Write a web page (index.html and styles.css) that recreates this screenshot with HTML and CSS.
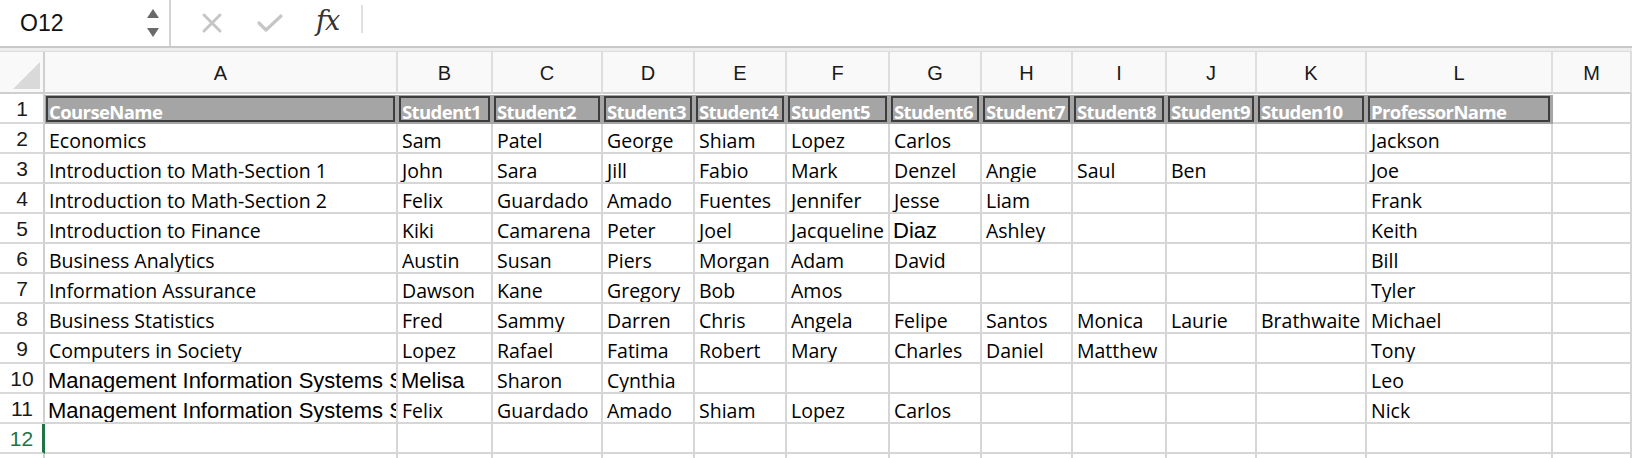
FILE: index.html
```html
<!DOCTYPE html>
<html>
<head>
<meta charset="utf-8">
<link rel="stylesheet" href="styles.css">
</head>
<body>
<div class="toolbar">
  <div class="namebox">
    <span class="cellref">O12</span>
    <span class="spin">
      <svg width="14" height="30" viewBox="0 0 14 30"><path d="M7 1 L13 10 L1 10 Z" fill="#6a6a6a"/><path d="M1 20 L13 20 L7 29 Z" fill="#6a6a6a"/></svg>
    </span>
  </div>
  <div class="fbtns">
    <svg class="ico" width="22" height="22" viewBox="0 0 22 22"><path d="M3 3 L19 19 M19 3 L3 19" stroke="#c6c6c6" stroke-width="3" stroke-linecap="round"/></svg>
    <svg class="ico" width="28" height="22" viewBox="0 0 28 22"><path d="M3 11 L10 18 L25 4" stroke="#c6c6c6" stroke-width="3.2" fill="none" stroke-linecap="round" stroke-linejoin="round"/></svg>
    <span class="fx">fx</span>
    <span class="fsep"></span>
  </div>
  <div class="formula"></div>
</div>
<div class="band"></div>
<div class="sheet">
  <div class="corner"><svg width="30" height="30" viewBox="0 0 30 30"><path d="M29 2 L29 29 L2 29 Z" fill="#d9d9d9"/></svg></div>
  <div class="ch">A</div><div class="ch">B</div><div class="ch">C</div><div class="ch">D</div><div class="ch">E</div><div class="ch">F</div><div class="ch">G</div><div class="ch">H</div><div class="ch">I</div><div class="ch">J</div><div class="ch">K</div><div class="ch">L</div><div class="ch">M</div>

  <div class="rh">1</div>
  <div class="c hd">CourseName</div><div class="c hd">Student1</div><div class="c hd">Student2</div><div class="c hd">Student3</div><div class="c hd">Student4</div><div class="c hd">Student5</div><div class="c hd">Student6</div><div class="c hd">Student7</div><div class="c hd">Student8</div><div class="c hd">Student9</div><div class="c hd">Studen10</div><div class="c hd">ProfessorName</div><div class="c"></div>

  <div class="rh">2</div>
  <div class="c">Economics</div><div class="c">Sam</div><div class="c">Patel</div><div class="c">George</div><div class="c">Shiam</div><div class="c">Lopez</div><div class="c">Carlos</div><div class="c"></div><div class="c"></div><div class="c"></div><div class="c"></div><div class="c">Jackson</div><div class="c"></div>

  <div class="rh">3</div>
  <div class="c">Introduction to Math-Section 1</div><div class="c">John</div><div class="c">Sara</div><div class="c">Jill</div><div class="c">Fabio</div><div class="c">Mark</div><div class="c">Denzel</div><div class="c">Angie</div><div class="c">Saul</div><div class="c">Ben</div><div class="c"></div><div class="c">Joe</div><div class="c"></div>

  <div class="rh">4</div>
  <div class="c">Introduction to Math-Section 2</div><div class="c">Felix</div><div class="c">Guardado</div><div class="c">Amado</div><div class="c">Fuentes</div><div class="c">Jennifer</div><div class="c">Jesse</div><div class="c">Liam</div><div class="c"></div><div class="c"></div><div class="c"></div><div class="c">Frank</div><div class="c"></div>

  <div class="rh">5</div>
  <div class="c">Introduction to Finance</div><div class="c">Kiki</div><div class="c">Camarena</div><div class="c">Peter</div><div class="c">Joel</div><div class="c">Jacqueline</div><div class="c ar">Diaz</div><div class="c">Ashley</div><div class="c"></div><div class="c"></div><div class="c"></div><div class="c">Keith</div><div class="c"></div>

  <div class="rh">6</div>
  <div class="c">Business Analytics</div><div class="c">Austin</div><div class="c">Susan</div><div class="c">Piers</div><div class="c">Morgan</div><div class="c">Adam</div><div class="c">David</div><div class="c"></div><div class="c"></div><div class="c"></div><div class="c"></div><div class="c">Bill</div><div class="c"></div>

  <div class="rh">7</div>
  <div class="c">Information Assurance</div><div class="c">Dawson</div><div class="c">Kane</div><div class="c">Gregory</div><div class="c">Bob</div><div class="c">Amos</div><div class="c"></div><div class="c"></div><div class="c"></div><div class="c"></div><div class="c"></div><div class="c">Tyler</div><div class="c"></div>

  <div class="rh">8</div>
  <div class="c">Business Statistics</div><div class="c">Fred</div><div class="c">Sammy</div><div class="c">Darren</div><div class="c">Chris</div><div class="c">Angela</div><div class="c">Felipe</div><div class="c">Santos</div><div class="c">Monica</div><div class="c">Laurie</div><div class="c">Brathwaite</div><div class="c">Michael</div><div class="c"></div>

  <div class="rh">9</div>
  <div class="c">Computers in Society</div><div class="c">Lopez</div><div class="c">Rafael</div><div class="c">Fatima</div><div class="c">Robert</div><div class="c">Mary</div><div class="c">Charles</div><div class="c">Daniel</div><div class="c">Matthew</div><div class="c"></div><div class="c"></div><div class="c">Tony</div><div class="c"></div>

  <div class="rh">10</div>
  <div class="c ar">Management Information Systems S</div><div class="c ar">Melisa</div><div class="c">Sharon</div><div class="c">Cynthia</div><div class="c"></div><div class="c"></div><div class="c"></div><div class="c"></div><div class="c"></div><div class="c"></div><div class="c"></div><div class="c">Leo</div><div class="c"></div>

  <div class="rh">11</div>
  <div class="c ar">Management Information Systems S</div><div class="c">Felix</div><div class="c">Guardado</div><div class="c">Amado</div><div class="c">Shiam</div><div class="c">Lopez</div><div class="c">Carlos</div><div class="c"></div><div class="c"></div><div class="c"></div><div class="c"></div><div class="c">Nick</div><div class="c"></div>

  <div class="rh sel">12</div>
  <div class="c"></div><div class="c"></div><div class="c"></div><div class="c"></div><div class="c"></div><div class="c"></div><div class="c"></div><div class="c"></div><div class="c"></div><div class="c"></div><div class="c"></div><div class="c"></div><div class="c"></div>

  <div class="rh"></div>
  <div class="c"></div><div class="c"></div><div class="c"></div><div class="c"></div><div class="c"></div><div class="c"></div><div class="c"></div><div class="c"></div><div class="c"></div><div class="c"></div><div class="c"></div><div class="c"></div><div class="c"></div>
</div>
</body>
</html>
```

FILE: styles.css
```css
* { box-sizing: border-box; }
html, body { margin: 0; padding: 0; background: #ffffff; overflow: hidden; }
body { width: 1632px; height: 458px; font-family: "Liberation Sans", Arial, sans-serif; }

.toolbar {
  height: 48px;
  display: flex;
  background: #ffffff;
  border-bottom: 2px solid #c9c9c9;
}
.namebox {
  width: 171px;
  display: flex;
  align-items: center;
  border-right: 2px solid #d3d3d3;
  padding-left: 20px;
}
.cellref {
  font-size: 23px;
  color: #111;
  width: 126px;
}
.spin { display: flex; align-items: center; }
.fbtns {
  display: flex;
  align-items: center;
  padding-left: 30px;
}
.fbtns .ico { margin-right: 33px; }
.fbtns .ico + .ico { margin-right: 32px; }
.fx {
  font-family: "DejaVu Serif", "Liberation Serif", serif;
  font-style: italic;
  font-size: 27px;
  color: #333;
  letter-spacing: -1px;
  margin-top: -5px;
}
.fsep {
  width: 2px;
  height: 28px;
  background: #e0e0e0;
  margin-left: 22px;
  margin-top: -8px;
}
.formula { flex: 1; }

.band {
  height: 4px;
  background: #ededed;
  border-bottom: 1px solid #dcdcdc;
}

.sheet {
  display: grid;
  grid-template-columns: 45px 353px 95px 110px 92px 92px 103px 92px 91px 94px 90px 110px 186px 79px;
  grid-template-rows: 42px repeat(12, 30px) 10px;
}
.corner {
  background: #f9f9f9;
  border-right: 2px solid #cfcfcf;
  border-bottom: 2px solid #cfcfcf;
  display: flex;
  align-items: flex-end;
  justify-content: flex-end;
  padding: 0 2px 2px 0;
  overflow: hidden;
}
.ch {
  background: #f9f9f9;
  border-right: 2px solid #dedede;
  border-bottom: 2px solid #cfcfcf;
  display: flex;
  align-items: center;
  justify-content: center;
  font-size: 20px;
  color: #1a1a1a;
  padding-top: 2px;
}
.rh {
  background: #ffffff;
  border-right: 2px solid #cfcfcf;
  border-bottom: 2px solid #d9d9d9;
  display: flex;
  align-items: center;
  justify-content: center;
  font-size: 21px;
  color: #1a1a1a;
  padding: 2px 0 0 1px;
}
.rh.sel {
  color: #217346;
  border-right: 3px solid #217346;
}
.c {
  border-right: 2px solid #d6d6d6;
  border-bottom: 2px solid #d6d6d6;
  font-family: "Open Sans", "Lato", sans-serif;
  font-size: 19.5px;
  letter-spacing: 0;
  color: #000;
  white-space: nowrap;
  overflow: hidden;
  padding: 5px 0 0 4px;
  display: flex;
  align-items: center;
}
.c.ar {
  font-family: "Liberation Sans", Arial, sans-serif;
  font-size: 22px;
  letter-spacing: 0;
  padding-left: 3px;
}
.c.hd {
  background: #a5a5a5;
  border-right-color: #a5a5a5;
  border-bottom: 1px solid #a5a5a5;
  box-shadow: inset 0 0 0 1px #a5a5a5, inset 0 0 0 3px #3d3d3d;
  color: #ffffff;
  font-weight: 700;
  font-size: 18.5px;
  letter-spacing: -0.6px;
  padding: 4px 0 0 4px;
  margin-top: 1px;
}
```
